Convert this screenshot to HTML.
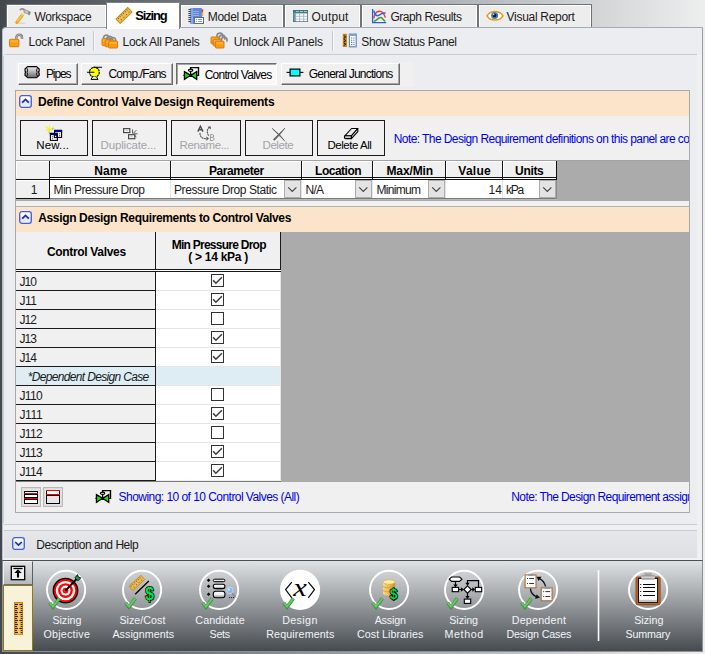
<!DOCTYPE html>
<html>
<head>
<meta charset="utf-8">
<title>Sizing - Design Requirements</title>
<style>
*{box-sizing:border-box;margin:0;padding:0}
html,body{width:705px;height:654px;overflow:hidden}
body{position:relative;font-family:"Liberation Sans",sans-serif;font-size:12px;color:#1a1a1a;
 background:linear-gradient(to right,#42484e 0%,#6d7379 25%,#9a9ea3 50%,#c6c9cc 78%,#d3d5d7 85%,#eeeeef 100%);}
.abs{position:absolute}
.t{position:absolute;white-space:nowrap;line-height:14px;height:14px}
/* tabs */
.tab{position:absolute;top:4px;height:24px;background:#ededed;border:1px solid #6f7479;border-bottom:none;box-shadow:inset 1px 1px 0 #fff,inset -1px 0 0 #fff}
.tab.act{top:2px;height:27px;background:#fff;border-color:#7d8287;box-shadow:none}
/* main panel */
#main{position:absolute;left:2px;top:27px;width:701px;height:534px;background:#ecedf0;border:1px solid #9a9ea3;border-left-color:#b9bec8;border-top-color:#a4aab4;border-radius:4px 0 0 0}
.hl{position:absolute;height:1px;background:#c6c8cd}
.vsep{position:absolute;width:1px;background:#c6c8cd}
/* nav buttons */
.nb{position:absolute;top:63px;height:22px;background:#f0f0f0;border:1px solid;border-color:#fff #6b6b6b #6b6b6b #fff;box-shadow:inset -1px -1px 0 #a6a6a6}
.nb.dn{border-color:#6b6b6b #fff #fff #6b6b6b;box-shadow:inset 1px 1px 0 #a6a6a6;background:#f8f8f8}
/* sections */
.ohead{position:absolute;left:16px;width:673px;height:25px;background:#fce4cb}
.ohead b{position:absolute;left:21px;top:5px;font-size:13px;line-height:15px;white-space:nowrap;color:#000}
.cbox{position:absolute;left:3px;top:4px;width:13px;height:13px;border:1px solid #3c50c8;border-radius:2px;background:#eef2ff}
.btn{position:absolute;top:120px;height:36px;background:#f0f0f0;border:1px solid #1a1a1a;font-size:12px;text-align:center}
.btn.dis{color:#9d9d9d}
.gray{position:absolute;background:#ababab}
/* grids */
.hd{position:absolute;background:#f0f0f0;font-weight:bold;text-align:center;font-size:12px;color:#000}
.c1{position:absolute;left:16px;width:139px;height:18px;background:#f0f0f0;border-bottom:0}
.dd{position:absolute;top:180px;width:17px;height:18px;background:#e3e3e3;border:1px solid #adadad}
.chk{position:absolute;left:211px;width:13px;height:13px;border:1px solid #333;background:#fff}
/* bottom bar */
#bar{position:absolute;left:2px;top:560px;width:701px;height:92px;border:1px solid #8b9096;border-top-color:#4b5056;
 background:linear-gradient(to bottom,#dfe2e4 0%,#464b50 100%)}
.circ{position:absolute;top:570px;width:40px;height:40px;border-radius:50%;border:2px solid #fff;background:rgba(255,255,255,.28)}
.circ.on{background:#fff}
.bl{position:absolute;color:#eef1f5;font-size:12px;line-height:14px;white-space:nowrap;text-align:center;transform:translateX(-50%)}
.sb{position:absolute;top:487px;width:20px;height:20px;background:#e4e4e4;border:1px solid #b9b9b9;box-shadow:inset 0 0 0 1px #dcdcdc}
.sb svg{position:absolute;left:0;top:0}
</style>
</head>
<body>

<!-- TABS -->
<div class="tab" style="left:6px;width:101px"></div>
<div class="tab" style="left:180px;width:104px"></div>
<div class="tab" style="left:284px;width:77px"></div>
<div class="tab" style="left:361px;width:117px"></div>
<div class="tab" style="left:478px;width:114px"></div>

<div id="main"></div>
<div class="tab act" style="left:106px;width:74px"></div>


<!-- TOOLBAR -->
<div class="vsep" style="left:93px;top:31px;height:20px;box-shadow:1px 0 0 #f8f8fa"></div>
<div class="vsep" style="left:332px;top:31px;height:20px;box-shadow:1px 0 0 #f8f8fa"></div>
<div class="abs" style="left:3px;top:54px;width:695px;height:471px;border:1px solid #c9ccd3;border-radius:4px 0 0 4px;border-right:none"></div>

<!-- inner panel -->
<div class="abs" style="left:4px;top:55px;width:693px;height:469px;background:#ecedf0"></div>
<div class="abs" style="left:16px;top:62px;width:398px;height:25px;background:#f0f0f0"></div>
<div class="abs" style="left:697px;top:54px;width:5px;height:506px;background:#f0f0f0"></div>

<!-- NAV BUTTONS -->
<div class="nb" style="left:18px;width:60px"></div>
<div class="nb" style="left:81px;width:92px"></div>
<div class="nb dn" style="left:176px;width:101px"></div>
<div class="nb" style="left:281px;width:119px"></div>

<!-- SECTION 1 -->
<div class="abs" style="left:15px;top:90px;width:675px;height:423px;border:1px solid #a9a9a9;background:#f0f0f0"></div>
<div class="ohead" style="top:91px"></div><svg class="abs" style="left:19px;top:95px" width="13" height="13" viewBox="0 0 13 13"><defs><linearGradient id="cb1" x1="0" y1="0" x2="0" y2="1"><stop offset="0" stop-color="#fff"/><stop offset=".45" stop-color="#f4f5fa"/><stop offset=".5" stop-color="#dfe2ee"/><stop offset="1" stop-color="#f2f3f9"/></linearGradient></defs><rect x=".7" y=".7" width="11.6" height="11.6" rx="2.2" fill="url(#cb1)" stroke="#3f5fe0" stroke-width="1.3"/><path d="M3.2 7.6 L6.5 4.5 L9.8 7.6" fill="none" stroke="#1f2fa8" stroke-width="1.7"/></svg>

<div class="btn" style="left:20px;width:68px"></div>
<div class="btn dis" style="left:92px;width:75px"></div>
<div class="btn dis" style="left:171px;width:70px"></div>
<div class="btn dis" style="left:245px;width:68px"></div>
<div class="btn" style="left:317px;width:68px"></div>

<!-- grid 1 -->
<div class="gray" style="left:16px;top:160px;width:673px;height:41px"></div>
<div class="abs" style="left:16px;top:160px;width:673px;height:1px;background:#a2a2a2"></div>
<div class="abs" style="left:16px;top:161px;width:541px;height:38px;background:#f0f0f0"></div>
<div class="abs" style="left:16px;top:161px;width:33px;height:16px;border-top:1px solid #fff;border-left:1px solid #fff"></div>
<div class="abs" style="left:50px;top:161px;width:120px;height:16px;border-top:1px solid #fff;border-left:1px solid #fff"></div>
<div class="abs" style="left:171px;top:161px;width:130px;height:16px;border-top:1px solid #fff;border-left:1px solid #fff"></div>
<div class="abs" style="left:302px;top:161px;width:70px;height:16px;border-top:1px solid #fff;border-left:1px solid #fff"></div>
<div class="abs" style="left:373px;top:161px;width:72px;height:16px;border-top:1px solid #fff;border-left:1px solid #fff"></div>
<div class="abs" style="left:446px;top:161px;width:56px;height:16px;border-top:1px solid #fff;border-left:1px solid #fff"></div>
<div class="abs" style="left:503px;top:161px;width:53px;height:16px;border-top:1px solid #fff;border-left:1px solid #fff"></div>
<div class="abs" style="left:50px;top:180px;width:506px;height:18px;background:#fff"></div>
<div class="abs" style="left:50px;top:177px;width:507px;height:1px;background:#111"></div>
<div class="abs" style="left:50px;top:178px;width:506px;height:1px;background:#fff"></div>
<div class="abs" style="left:16px;top:179px;width:541px;height:1px;background:#111"></div>
<div class="abs" style="left:16px;top:180px;width:33px;height:1px;background:#fff"></div>
<div class="abs" style="left:16px;top:198px;width:34px;height:1px;background:#111"></div>
<div class="abs" style="left:50px;top:198px;width:507px;height:1px;background:#7a7a7a"></div>
<div class="abs" style="left:16px;top:199px;width:541px;height:1px;background:#b8b8b8"></div>
<div class="abs" style="left:49px;top:161px;width:1px;height:38px;background:#111"></div>
<div class="abs" style="left:170px;top:161px;width:1px;height:18px;background:#111"></div>
<div class="abs" style="left:301px;top:161px;width:1px;height:18px;background:#111"></div>
<div class="abs" style="left:372px;top:161px;width:1px;height:18px;background:#111"></div>
<div class="abs" style="left:445px;top:161px;width:1px;height:18px;background:#111"></div>
<div class="abs" style="left:502px;top:161px;width:1px;height:18px;background:#111"></div>
<div class="abs" style="left:556px;top:161px;width:1px;height:18px;background:#111"></div>
<div class="abs" style="left:170px;top:180px;width:1px;height:18px;background:#e4e4e4"></div>
<div class="abs" style="left:301px;top:180px;width:1px;height:18px;background:#e4e4e4"></div>
<div class="abs" style="left:372px;top:180px;width:1px;height:18px;background:#e4e4e4"></div>
<div class="abs" style="left:445px;top:180px;width:1px;height:18px;background:#e4e4e4"></div>
<div class="abs" style="left:502px;top:180px;width:1px;height:18px;background:#e4e4e4"></div>
<div class="abs" style="left:556px;top:180px;width:1px;height:19px;background:#8a8a8a"></div>

<div class="dd" style="left:284px"><svg width="15" height="16" viewBox="0 0 15 16" style="position:absolute;left:0;top:0"><path d="M3.2 6.4 L7.3 10.4 L11.4 6.4" fill="none" stroke="#404040" stroke-width="1.1"/></svg></div>
<div class="dd" style="left:355px"><svg width="15" height="16" viewBox="0 0 15 16" style="position:absolute;left:0;top:0"><path d="M3.2 6.4 L7.3 10.4 L11.4 6.4" fill="none" stroke="#404040" stroke-width="1.1"/></svg></div>
<div class="dd" style="left:428px"><svg width="15" height="16" viewBox="0 0 15 16" style="position:absolute;left:0;top:0"><path d="M3.2 6.4 L7.3 10.4 L11.4 6.4" fill="none" stroke="#404040" stroke-width="1.1"/></svg></div>
<div class="dd" style="left:539px"><svg width="15" height="16" viewBox="0 0 15 16" style="position:absolute;left:0;top:0"><path d="M3.2 6.4 L7.3 10.4 L11.4 6.4" fill="none" stroke="#404040" stroke-width="1.1"/></svg></div>

<!-- SECTION 2 -->
<div class="abs" style="left:16px;top:206px;width:673px;height:1px;background:#b4b4b4"></div>
<div class="ohead" style="top:207px"></div><svg class="abs" style="left:19px;top:211px" width="13" height="13" viewBox="0 0 13 13"><defs><linearGradient id="cb2" x1="0" y1="0" x2="0" y2="1"><stop offset="0" stop-color="#fff"/><stop offset=".45" stop-color="#f4f5fa"/><stop offset=".5" stop-color="#dfe2ee"/><stop offset="1" stop-color="#f2f3f9"/></linearGradient></defs><rect x=".7" y=".7" width="11.6" height="11.6" rx="2.2" fill="url(#cb2)" stroke="#3f5fe0" stroke-width="1.3"/><path d="M3.2 7.6 L6.5 4.5 L9.8 7.6" fill="none" stroke="#1f2fa8" stroke-width="1.7"/></svg>
<div class="gray" style="left:16px;top:232px;width:673px;height:250px"></div>
<div class="abs" style="left:16px;top:232px;width:265px;height:249px;background:#fff"></div>
<div class="abs" style="left:16px;top:232px;width:265px;height:38px;background:#f0f0f0"></div>
<div class="abs" style="left:16px;top:271px;width:139px;height:210px;background:#f0f0f0"></div>
<div class="abs" style="left:16px;top:367px;width:264px;height:18px;background:#deedf4"></div>

<div class="abs" style="left:155px;top:232px;width:1px;height:249px;background:#1a1a1a"></div>
<div class="abs" style="left:280px;top:232px;width:1px;height:39px;background:#1a1a1a"></div>
<div class="abs" style="left:16px;top:269px;width:265px;height:1px;background:#1a1a1a"></div>
<div class="abs" style="left:16px;top:270px;width:265px;height:1px;background:#fff"></div>
<div class="abs" style="left:16px;top:271px;width:140px;height:1px;background:#1a1a1a"></div>
<div class="abs" style="left:156px;top:271px;width:125px;height:1px;background:#1a1a1a"></div>
<div class="abs" style="left:16px;top:290px;width:140px;height:1px;background:#1a1a1a"></div>
<div class="abs" style="left:156px;top:290px;width:124px;height:1px;background:#e6e6e6"></div>
<div class="abs" style="left:16px;top:309px;width:140px;height:1px;background:#1a1a1a"></div>
<div class="abs" style="left:156px;top:309px;width:124px;height:1px;background:#e6e6e6"></div>
<div class="abs" style="left:16px;top:328px;width:140px;height:1px;background:#1a1a1a"></div>
<div class="abs" style="left:156px;top:328px;width:124px;height:1px;background:#e6e6e6"></div>
<div class="abs" style="left:16px;top:347px;width:140px;height:1px;background:#1a1a1a"></div>
<div class="abs" style="left:156px;top:347px;width:124px;height:1px;background:#e6e6e6"></div>
<div class="abs" style="left:16px;top:366px;width:140px;height:1px;background:#1a1a1a"></div>
<div class="abs" style="left:156px;top:366px;width:124px;height:1px;background:#e6e6e6"></div>
<div class="abs" style="left:16px;top:385px;width:140px;height:1px;background:#1a1a1a"></div>
<div class="abs" style="left:156px;top:385px;width:124px;height:1px;background:#e6e6e6"></div>
<div class="abs" style="left:16px;top:404px;width:140px;height:1px;background:#1a1a1a"></div>
<div class="abs" style="left:156px;top:404px;width:124px;height:1px;background:#e6e6e6"></div>
<div class="abs" style="left:16px;top:423px;width:140px;height:1px;background:#1a1a1a"></div>
<div class="abs" style="left:156px;top:423px;width:124px;height:1px;background:#e6e6e6"></div>
<div class="abs" style="left:16px;top:442px;width:140px;height:1px;background:#1a1a1a"></div>
<div class="abs" style="left:156px;top:442px;width:124px;height:1px;background:#e6e6e6"></div>
<div class="abs" style="left:16px;top:461px;width:140px;height:1px;background:#1a1a1a"></div>
<div class="abs" style="left:156px;top:461px;width:124px;height:1px;background:#e6e6e6"></div>
<div class="abs" style="left:16px;top:480px;width:140px;height:1px;background:#1a1a1a"></div>
<div class="abs" style="left:156px;top:480px;width:125px;height:1px;background:#ececec"></div>
<div class="abs" style="left:16px;top:481px;width:265px;height:1px;background:#7c7c7c;z-index:2"></div>
<div class="abs" style="left:280px;top:272px;width:1px;height:208px;background:#e6e6e6"></div>
<svg class="abs" style="left:211px;top:274px" width="13" height="13" viewBox="0 0 13 13"><rect x=".5" y=".5" width="12" height="12" fill="#fff" stroke="#333"/><path d="M2.1 6.3 L4.9 9.2 L10.9 3.2" fill="none" stroke="#3a3a3a" stroke-width="1.5"/></svg>
<svg class="abs" style="left:211px;top:293px" width="13" height="13" viewBox="0 0 13 13"><rect x=".5" y=".5" width="12" height="12" fill="#fff" stroke="#333"/><path d="M2.1 6.3 L4.9 9.2 L10.9 3.2" fill="none" stroke="#3a3a3a" stroke-width="1.5"/></svg>
<svg class="abs" style="left:211px;top:312px" width="13" height="13" viewBox="0 0 13 13"><rect x=".5" y=".5" width="12" height="12" fill="#fff" stroke="#333"/></svg>
<svg class="abs" style="left:211px;top:331px" width="13" height="13" viewBox="0 0 13 13"><rect x=".5" y=".5" width="12" height="12" fill="#fff" stroke="#333"/><path d="M2.1 6.3 L4.9 9.2 L10.9 3.2" fill="none" stroke="#3a3a3a" stroke-width="1.5"/></svg>
<svg class="abs" style="left:211px;top:350px" width="13" height="13" viewBox="0 0 13 13"><rect x=".5" y=".5" width="12" height="12" fill="#fff" stroke="#333"/><path d="M2.1 6.3 L4.9 9.2 L10.9 3.2" fill="none" stroke="#3a3a3a" stroke-width="1.5"/></svg>
<svg class="abs" style="left:211px;top:388px" width="13" height="13" viewBox="0 0 13 13"><rect x=".5" y=".5" width="12" height="12" fill="#fff" stroke="#333"/></svg>
<svg class="abs" style="left:211px;top:407px" width="13" height="13" viewBox="0 0 13 13"><rect x=".5" y=".5" width="12" height="12" fill="#fff" stroke="#333"/><path d="M2.1 6.3 L4.9 9.2 L10.9 3.2" fill="none" stroke="#3a3a3a" stroke-width="1.5"/></svg>
<svg class="abs" style="left:211px;top:426px" width="13" height="13" viewBox="0 0 13 13"><rect x=".5" y=".5" width="12" height="12" fill="#fff" stroke="#333"/></svg>
<svg class="abs" style="left:211px;top:445px" width="13" height="13" viewBox="0 0 13 13"><rect x=".5" y=".5" width="12" height="12" fill="#fff" stroke="#333"/><path d="M2.1 6.3 L4.9 9.2 L10.9 3.2" fill="none" stroke="#3a3a3a" stroke-width="1.5"/></svg>
<svg class="abs" style="left:211px;top:464px" width="13" height="13" viewBox="0 0 13 13"><rect x=".5" y=".5" width="12" height="12" fill="#fff" stroke="#333"/><path d="M2.1 6.3 L4.9 9.2 L10.9 3.2" fill="none" stroke="#3a3a3a" stroke-width="1.5"/></svg>

<!-- status row -->
<div class="abs" style="left:16px;top:482px;width:673px;height:30px;background:#f0f0f0"></div>
<div class="sb" style="left:21px"><svg width="18" height="18" viewBox="0 0 18 18" shape-rendering="crispEdges"><rect x="2" y="3" width="14" height="13" fill="#000"/><rect x="3" y="4" width="12" height="1" fill="#fff"/><rect x="3" y="7" width="12" height="2" fill="#fff"/><rect x="3" y="12" width="12" height="3" fill="#fff"/><rect x="2" y="5" width="14" height="1" fill="#f00000"/><rect x="2" y="10" width="14" height="1" fill="#f00000"/></svg></div>
<div class="sb" style="left:43px"><svg width="18" height="18" viewBox="0 0 18 18" shape-rendering="crispEdges"><rect x="2" y="2" width="14" height="14" fill="#000"/><rect x="3" y="3" width="12" height="3" fill="#fff"/><rect x="3" y="8" width="12" height="7" fill="#e6e6e6"/><rect x="2" y="2" width="14" height="1" fill="#f00000"/><rect x="2" y="6" width="14" height="1" fill="#f00000"/></svg></div>
<!-- splitter + description -->
<div class="hl" style="left:4px;top:524px;width:693px;background:#c9cbd1"></div>
<svg class="abs" style="left:347px;top:525px" width="9" height="5" viewBox="0 0 9 5"><path d="M0.5 0.5H8.5L4.5 4.5Z" fill="#6a6e74"/></svg>
<div class="abs" style="left:4px;top:530px;width:693px;height:28px;background:linear-gradient(#e6e7ea,#dedfe3);border-top:1px solid #c9cbd1"></div>
<div class="abs" style="left:4px;top:525px;width:693px;height:5px;background:#f0f0f0"></div>
<div class="abs" style="left:4px;top:558px;width:698px;height:2px;background:#f2f2f3"></div>
<svg class="abs" style="left:12px;top:537px" width="13" height="13" viewBox="0 0 13 13"><defs><linearGradient id="cb3" x1="0" y1="0" x2="0" y2="1"><stop offset="0" stop-color="#fff"/><stop offset=".45" stop-color="#f4f5fa"/><stop offset=".5" stop-color="#dfe2ee"/><stop offset="1" stop-color="#f2f3f9"/></linearGradient></defs><rect x=".7" y=".7" width="11.6" height="11.6" rx="2.2" fill="url(#cb3)" stroke="#3f5fe0" stroke-width="1.3"/><path d="M3.2 5 L6.5 8.1 L9.8 5" fill="none" stroke="#1f2fa8" stroke-width="1.7"/></svg>

<div id="bar"></div>
<div class="abs" style="left:3px;top:561px;width:30px;height:24px;background:linear-gradient(#e2e2e3,#b6b8ba);border-right:1px solid #5a5f65;border-bottom:1px solid #6a6f75;border-top:1px solid #f0f0f0;border-left:1px solid #eee"></div>
<div class="abs" style="left:3px;top:585px;width:30px;height:66px;background:#f8f3d8;border:1px solid #8a7a18"></div>
<div class="abs" style="left:597px;top:570px;width:3px;height:71px;background:linear-gradient(to right,rgba(255,255,255,.25) 0 1px,#fcfcfc 1px 2px,rgba(255,255,255,.3) 2px 3px)"></div>
<svg class="abs" style="left:42.0px;top:566px" width="48" height="48" viewBox="0 0 48 48"><circle cx="24.1" cy="23.85" r="19.1" fill="rgba(255,255,255,0.05)" stroke="#fff" stroke-width="1.9"/><circle cx="23.5" cy="24.6" r="12.2" fill="#f00" stroke="#000" stroke-width="1.4"/>
<circle cx="23.5" cy="24.6" r="9.7" fill="#fff"/><circle cx="23.5" cy="24.6" r="7.4" fill="#f00"/>
<circle cx="23.5" cy="24.6" r="5" fill="#fff"/><circle cx="23.5" cy="24.6" r="2.9" fill="#f00"/><circle cx="23.3" cy="24.8" r="1" fill="#ffd0d0"/>
<path d="M23.5 24.6 L34.6 13" stroke="#000" stroke-width="1.9" stroke-linecap="round"/>
<path d="M33 11.8 L35.6 8.6 L36.2 11 L38.8 11.8 L36 14.8 Z" fill="#1f9e50" stroke="#000" stroke-width=".9" stroke-linejoin="round"/><path d="M7.6 36.8 L11 41.2 L17.4 32.4" fill="none" stroke="#3e9640" stroke-width="3.5" stroke-linejoin="miter"/><path d="M7.8 36.9 L11 40.6 L17.2 32.6" fill="none" stroke="#6cc66a" stroke-width="1.9"/></svg>
<svg class="abs" style="left:118.0px;top:566px" width="48" height="48" viewBox="0 0 48 48"><circle cx="24.1" cy="23.85" r="19.1" fill="rgba(255,255,255,0.05)" stroke="#fff" stroke-width="1.9"/><g transform="rotate(-43.2 18.9 16.9)"><rect x="10.8" y="14" width="16.2" height="5.8" fill="#f1b746" stroke="#c98b1a" stroke-width=".9"/>
<path d="M12.6 15.3v.1M15 15.3v.1M17.4 15.3v.1M19.8 15.3v.1M22.2 15.3v.1M24.6 15.3v.1M14 18v.1M17.4 18v.1M20.8 18v.1M24.2 18v.1" stroke="#4a5878" stroke-width="1" stroke-linecap="round"/></g>
<path d="M17.2 28.3 L30.8 15" stroke="#000" stroke-width="1.3"/>
<text x="31.6" y="34" font-family="Liberation Sans" font-weight="bold" font-size="19" text-anchor="middle" fill="#00e24a" stroke="#000" stroke-width="1.7" paint-order="stroke" stroke-linejoin="round" transform="translate(31.6 0) scale(.82 1) translate(-31.6 0)">$</text><path d="M7.6 36.8 L11 41.2 L17.4 32.4" fill="none" stroke="#3e9640" stroke-width="3.5" stroke-linejoin="miter"/><path d="M7.8 36.9 L11 40.6 L17.2 32.6" fill="none" stroke="#6cc66a" stroke-width="1.9"/></svg>
<svg class="abs" style="left:195.0px;top:566px" width="48" height="48" viewBox="0 0 48 48"><circle cx="24.1" cy="23.85" r="19.1" fill="rgba(255,255,255,0.05)" stroke="#fff" stroke-width="1.9"/><defs><linearGradient id="cg" x1="0" y1="0" x2="0" y2="1"><stop offset="0" stop-color="#fff"/><stop offset=".5" stop-color="#f0f0f0"/><stop offset="1" stop-color="#8e8e8e"/></linearGradient></defs>
<path d="M13.6 12.5l1.8 1.8l-1.8 1.8l-1.8-1.8zM13.6 18.5l1.8 1.8l-1.8 1.8l-1.8-1.8zM13.6 26.5l1.8 1.8l-1.8 1.8l-1.8-1.8z" fill="#000"/>
<rect x="18.3" y="13.2" width="11.6" height="2.5" rx="1.25" fill="url(#cg)" stroke="#000" stroke-width="1"/>
<rect x="18.3" y="18.3" width="11.6" height="4.3" rx="2" fill="url(#cg)" stroke="#000" stroke-width="1.1"/>
<rect x="18.3" y="25.2" width="11.6" height="6.5" rx="2.4" fill="url(#cg)" stroke="#000" stroke-width="1.1"/>
<path d="M36.8 26.8 L39.6 30.2" stroke="#8c8c8c" stroke-width="1.8" stroke-linecap="round"/>
<circle cx="34.9" cy="24.5" r="3.2" fill="#86b8ee" stroke="#c4dcf6" stroke-width=".9"/><circle cx="34" cy="23.6" r="1.1" fill="#d8ecff"/>
<path d="M34.2 31.6h.9M36.2 31.6h.9M38.2 31.6h.9" stroke="#000" stroke-width="1"/><path d="M7.6 36.8 L11 41.2 L17.4 32.4" fill="none" stroke="#3e9640" stroke-width="3.5" stroke-linejoin="miter"/><path d="M7.8 36.9 L11 40.6 L17.2 32.6" fill="none" stroke="#6cc66a" stroke-width="1.9"/></svg>
<svg class="abs" style="left:276.0px;top:566px" width="48" height="48" viewBox="0 0 48 48"><circle cx="24.1" cy="23.85" r="19.1" fill="#fff" stroke="#fff" stroke-width="1.9"/><path d="M15.8 16.1 L9.6 23.6 L15.8 31.9M32.3 16.1 L38.5 23.6 L32.3 31.9" fill="none" stroke="#000" stroke-width="1.15"/>
<text x="24" y="29.7" font-family="Liberation Serif" font-style="italic" font-size="25.5" text-anchor="middle" fill="#000" transform="translate(24 0) scale(1.2 1) translate(-24 0)">x</text><path d="M7.6 36.8 L11 41.2 L17.4 32.4" fill="none" stroke="#3e9640" stroke-width="3.5" stroke-linejoin="miter"/><path d="M7.8 36.9 L11 40.6 L17.2 32.6" fill="none" stroke="#6cc66a" stroke-width="1.9"/></svg>
<svg class="abs" style="left:365.0px;top:566px" width="48" height="48" viewBox="0 0 48 48"><circle cx="24.1" cy="23.85" r="19.1" fill="rgba(255,255,255,0.05)" stroke="#fff" stroke-width="1.9"/><defs><linearGradient id="dbg" x1="0" y1="0" x2="1" y2="0"><stop offset="0" stop-color="#f6d98a"/><stop offset=".35" stop-color="#f0c45a"/><stop offset="1" stop-color="#c98f28"/></linearGradient></defs>
<path d="M18 16 V27.6 C18 30.4 30.1 30.4 30.1 27.6 V16Z" fill="url(#dbg)"/>
<path d="M18 20 C18 22.4 30.1 22.4 30.1 20M18 24 C18 26.4 30.1 26.4 30.1 24" fill="none" stroke="#d8a23a" stroke-width=".9"/>
<ellipse cx="24.05" cy="16" rx="6.05" ry="2.2" fill="#fbf0a6" stroke="#e0b050" stroke-width=".7"/>
<text x="28.7" y="32.6" font-family="Liberation Sans" font-weight="bold" font-size="15.5" text-anchor="middle" fill="#00d846" stroke="#000" stroke-width="1.6" paint-order="stroke" stroke-linejoin="round" transform="translate(28.7 0) scale(.9 1) translate(-28.7 0)">$</text><path d="M7.6 36.8 L11 41.2 L17.4 32.4" fill="none" stroke="#3e9640" stroke-width="3.5" stroke-linejoin="miter"/><path d="M7.8 36.9 L11 40.6 L17.2 32.6" fill="none" stroke="#6cc66a" stroke-width="1.9"/></svg>
<svg class="abs" style="left:440.0px;top:566px" width="48" height="48" viewBox="0 0 48 48"><circle cx="24.1" cy="23.85" r="19.1" fill="rgba(255,255,255,0.05)" stroke="#fff" stroke-width="1.9"/><g fill="#fff" stroke="#000" stroke-width="1.1">
<path d="M9.3 13.2 L11.6 11 H19.6 L21.9 13.2 L19.6 15.4 H11.6Z"/>
<rect x="12.2" y="21.4" width="6.4" height="4.3"/><rect x="35.3" y="21.4" width="6.4" height="4.3"/><rect x="24.3" y="33.1" width="6.4" height="4.3"/>
<path d="M27.5 19.8 L31.2 23.5 L27.5 27.2 L23.8 23.5Z"/></g>
<path d="M15.5 15.4V20M18.7 23.5H22M31.2 23.5H33.5M27.5 27.2V31M38.5 21.4V14.7H27.5V18" fill="none" stroke="#000" stroke-width="1.2"/>
<path d="M13.3 18.4H17.7L15.5 21.4ZM20.9 21.2V25.8L23.9 23.5ZM32.3 21.2V25.8L35.3 23.5ZM25.3 29.9H29.7L27.5 33ZM25.3 16.8H29.7L27.5 19.8Z" fill="#000"/><path d="M7.6 36.8 L11 41.2 L17.4 32.4" fill="none" stroke="#3e9640" stroke-width="3.5" stroke-linejoin="miter"/><path d="M7.8 36.9 L11 40.6 L17.2 32.6" fill="none" stroke="#6cc66a" stroke-width="1.9"/></svg>
<svg class="abs" style="left:514.0px;top:566px" width="48" height="48" viewBox="0 0 48 48"><circle cx="24.1" cy="23.85" r="19.1" fill="rgba(255,255,255,0.05)" stroke="#fff" stroke-width="1.9"/><g><rect x="11.1" y="8.9" width="10.9" height="12.9" fill="#fff" stroke="#b36a30" stroke-width="1.1"/><rect x="14.2" y="7.8" width="5.6" height="2.2" fill="#9a9a9a"/>
<path d="M13 12.5h1M15.2 12.5h4.8M13 17.5h1M15.2 17.5h4.8" stroke="#333" stroke-width="1"/></g>
<g><rect x="27.2" y="21.9" width="10.9" height="12.9" fill="#fff" stroke="#b36a30" stroke-width="1.1"/><rect x="30.4" y="20.8" width="5.6" height="2.2" fill="#9a9a9a"/>
<path d="M29.2 25.6h1M31.4 25.6h4.8M29.2 30.5h1M31.4 30.5h4.8" stroke="#333" stroke-width="1"/></g>
<path d="M31.6 20.4 C30.6 16.6 28 13.8 25 12.4" fill="none" stroke="#111" stroke-width="1.3"/>
<path d="M22.4 10.8 L27.6 10.8 L24.6 15Z" fill="#111"/>
<path d="M16.4 22.6 C16.8 26.8 19.6 29.8 23 31" fill="none" stroke="#111" stroke-width="1.3"/>
<path d="M26 31.6 L21 33 L22.6 28.4Z" fill="#111"/><path d="M7.6 36.8 L11 41.2 L17.4 32.4" fill="none" stroke="#3e9640" stroke-width="3.5" stroke-linejoin="miter"/><path d="M7.8 36.9 L11 40.6 L17.2 32.6" fill="none" stroke="#6cc66a" stroke-width="1.9"/></svg>
<svg class="abs" style="left:624.0px;top:566px" width="48" height="48" viewBox="0 0 48 48"><circle cx="24.1" cy="23.85" r="19.1" fill="rgba(255,255,255,0.05)" stroke="#fff" stroke-width="1.9"/><defs><linearGradient id="clg" x1="0" y1="0" x2="0" y2="1"><stop offset="0" stop-color="#8a8a8a"/><stop offset=".5" stop-color="#d6d6d6"/><stop offset="1" stop-color="#7c7c7c"/></linearGradient></defs>
<rect x="12" y="11" width="24.1" height="27.8" rx="1.6" fill="#b9692c" stroke="#8c4a1c" stroke-width="1"/>
<rect x="14.5" y="12.4" width="19.1" height="24" fill="#fff" stroke="#111" stroke-width="1.1"/>
<rect x="15.1" y="33.8" width="17.9" height="2" fill="#c4c4c4"/>
<rect x="20.6" y="7" width="7.2" height="3" rx=".6" fill="#a8a8a8"/>
<rect x="17.3" y="9.2" width="13.6" height="4.3" rx=".8" fill="url(#clg)"/>
<path d="M16.2 18.5h1M19 18.5h12M16.2 21.5h1M19 21.5h12M16.2 25.5h1M19 25.5h12M16.2 29.5h1M19 29.5h12" stroke="#000" stroke-width="1.1"/></svg>
<svg class="abs" style="left:10px;top:565px" width="16" height="16" viewBox="0 0 16 16"><rect x="1.3" y="1.3" width="13.4" height="13.4" fill="#efefef" stroke="#000" stroke-width="1.3"/><path d="M3.4 3.5H12.6" stroke="#000" stroke-width="1.3"/><path d="M8 12.6V6.4" stroke="#000" stroke-width="2.1"/><path d="M4.3 8 L8 4.3 L11.7 8Z" fill="#000"/></svg>
<svg class="abs" style="left:13.5px;top:601.5px" width="9.4" height="33.4" viewBox="0 0 9.4 33.4"><rect x=".6" y=".6" width="8.2" height="32.2" fill="#eeb03c" stroke="#c27c18" stroke-width="1.1"/><rect x="3.6" y="1.2" width="2.2" height="31" fill="#f6c860"/><path d="M1 2.5h3M8.4 2.5h-3" stroke="#111" stroke-width=".9"/><path d="M1 4.5h2M8.4 4.5h-1.6" stroke="#111" stroke-width=".9"/><path d="M1 6.5h3M8.4 6.5h-1.6" stroke="#111" stroke-width=".9"/><path d="M1 8.5h2M8.4 8.5h-1.6" stroke="#111" stroke-width=".9"/><path d="M1 10.5h3M8.4 10.5h-3" stroke="#111" stroke-width=".9"/><path d="M1 12.5h2M8.4 12.5h-1.6" stroke="#111" stroke-width=".9"/><path d="M1 14.5h3M8.4 14.5h-1.6" stroke="#111" stroke-width=".9"/><path d="M1 16.5h2M8.4 16.5h-1.6" stroke="#111" stroke-width=".9"/><path d="M1 18.5h3M8.4 18.5h-3" stroke="#111" stroke-width=".9"/><path d="M1 20.5h2M8.4 20.5h-1.6" stroke="#111" stroke-width=".9"/><path d="M1 22.5h3M8.4 22.5h-1.6" stroke="#111" stroke-width=".9"/><path d="M1 24.5h2M8.4 24.5h-1.6" stroke="#111" stroke-width=".9"/><path d="M1 26.5h3M8.4 26.5h-3" stroke="#111" stroke-width=".9"/><path d="M1 28.5h2M8.4 28.5h-1.6" stroke="#111" stroke-width=".9"/><path d="M1 30.5h3M8.4 30.5h-1.6" stroke="#111" stroke-width=".9"/></svg>
<!-- tab icons -->
<svg class="abs" style="left:14px;top:7px" width="18" height="18" viewBox="0 0 18 18">
 <ellipse cx="7.5" cy="16.2" rx="4.5" ry=".8" fill="#cfcfcf" opacity=".7"/>
 <path d="M2.9 15.4 L8.6 7.6" stroke="#e8a90c" stroke-width="3.3" stroke-linecap="round"/>
 <path d="M3.3 14.4 L8.2 7.8" stroke="#f9d24e" stroke-width="1.1" stroke-linecap="round"/>
 <path d="M8.4 7.8 L10.6 4.6" stroke="#e2e2e2" stroke-width="2.6"/>
 <path d="M6.4 2.6 C7.6 1.4 9.6 1.6 10.6 3.4" fill="none" stroke="#909090" stroke-width="1.7" stroke-linecap="round"/>
 <path d="M9.8 2.8 L12.2 3.2 L16.4 5 L15.4 8 L13.4 6.6 L10.4 5.6Z" fill="#c9c9c9" stroke="#8a8a8a" stroke-width=".8"/>
 <path d="M14.6 4.4 L16.4 5 L15.4 8 L13.8 6.8Z" fill="#8a8a8a"/>
</svg>
<svg class="abs" style="left:115px;top:6px" width="18" height="18" viewBox="0 0 18 18">
 <g transform="rotate(-44 9 9.5)"><rect x="0.8" y="6.4" width="16.4" height="6.2" fill="#f3bd45" stroke="#c88a18" stroke-width="1"/>
 <path d="M3 7.6v0.1M5.4 7.6v0.1M7.8 7.6v0.1M10.2 7.6v0.1M12.6 7.6v0.1M15 7.6v0.1M4.2 10.6v0.1M7.8 10.6v0.1M11.4 10.6v0.1M15 10.6v0.1" stroke="#4a5a78" stroke-width="1.1" stroke-linecap="round"/></g>
</svg>
<svg class="abs" style="left:187px;top:7px" width="18" height="18" viewBox="0 0 18 18">
 <rect x="3" y="1" width="12" height="16" rx="1" fill="#5f86dc"/>
 <rect x="3" y="1" width="3" height="16" fill="#86a6ea"/>
 <path d="M14.6 2.2h1.6v3.4h-1.6z" fill="#e0483c"/><path d="M14.6 5.6h1.6v3.4h-1.6z" fill="#e9b11c"/>
 <path d="M6.5 4.5h6M6.5 6.5h6M6.5 8.5h6" stroke="#c8d6f6" stroke-width="1" stroke-dasharray="1 1"/>
 <path d="M1.4 2.6h2.4M1.4 4.6h2.4M1.4 6.6h2.4M1.4 8.6h2.4M1.4 10.6h2.4M1.4 12.6h2.4M1.4 14.6h2.4" stroke="#333" stroke-width="1"/>
 <rect x="7.5" y="10.5" width="9" height="6" fill="#fff" stroke="#5b6f8c"/>
 <path d="M9 12.5h1M11 12.5h4M9 14.5h1M11 14.5h4" stroke="#7f97c6" stroke-width="1"/>
</svg>
<svg class="abs" style="left:292px;top:9px" width="17" height="14" viewBox="0 0 17 14">
 <rect x="1" y="1" width="15" height="12" fill="#a9b5c9"/>
 <rect x="1" y="1" width="15" height="3" fill="#3f8585"/>
 <rect x="1" y="4" width="2.4" height="9" fill="#6aa3a3"/>
 <path d="M4 2.5h3M8 2.5h3M12 2.5h3" stroke="#9cc9c9" stroke-width="1"/>
 <g fill="#fff"><rect x="4.2" y="4.8" width="3" height="2"/><rect x="8.2" y="4.8" width="3" height="2"/><rect x="12.2" y="4.8" width="3" height="2"/>
 <rect x="4.2" y="7.7" width="3" height="2"/><rect x="8.2" y="7.7" width="3" height="2"/><rect x="12.2" y="7.7" width="3" height="2"/>
 <rect x="4.2" y="10.5" width="3" height="2"/><rect x="8.2" y="10.5" width="3" height="2"/><rect x="12.2" y="10.5" width="3" height="2"/></g>
 <rect x="1.3" y="1.3" width="14.4" height="11.4" fill="none" stroke="#4a6a7a" stroke-width=".6"/>
</svg>
<svg class="abs" style="left:371px;top:8px" width="17" height="17" viewBox="0 0 17 17">
 <path d="M1.6 1v13.6h13.6" fill="none" stroke="#2563c4" stroke-width="1.3"/>
 <path d="M2.8 10.4 C4.4 1.2 11.6 0.6 14.4 9.6" fill="none" stroke="#f03a34" stroke-width="1.5"/>
 <path d="M2.8 2.6 C4 7 5.4 8.6 7.6 7.4 C10 5.6 11.6 4.4 14.6 5" fill="none" stroke="#2a66d8" stroke-width="1.5"/>
 <path d="M2.8 13.2 C5.6 13 7 9.4 9.6 9.6 C11.6 9.8 12.4 12.4 14.2 13.2" fill="none" stroke="#3f9a3a" stroke-width="1.5"/>
</svg>
<svg class="abs" style="left:486px;top:9px" width="18" height="14" viewBox="0 0 18 14">
 <path d="M1 6.8 C4.4 1 13.6 1 17 6.8 C13.6 12.4 4.4 12.4 1 6.8Z" fill="#fff" stroke="#e39a1c" stroke-width="1.5"/>
 <circle cx="8.6" cy="6.4" r="3.5" fill="#3f7fc8"/><circle cx="8.6" cy="6.4" r="1.9" fill="#1a1a22"/><circle cx="7.6" cy="5.4" r=".8" fill="#cfe0f4"/>
</svg>
<!-- toolbar icons -->
<svg class="abs" style="left:8px;top:33px" width="17" height="16" viewBox="0 0 17 16">
 <path d="M8.4 6 V4.6 C8.4 0.8 14 0.8 14 4.6 V6" fill="none" stroke="#7a7a7a" stroke-width="2.4"/><path d="M8.4 6 V4.6 C8.4 0.8 14 0.8 14 4.6 V6" fill="none" stroke="#c4c4c4" stroke-width=".9"/>
 <rect x="1.5" y="6.3" width="9.4" height="7.4" rx=".8" fill="#ff9c0e" stroke="#d77d12"/>
 <rect x="2.4" y="7.2" width="7.6" height="2.2" fill="#ffb640" opacity=".8"/>
</svg>
<svg class="abs" style="left:101px;top:33px" width="19" height="17" viewBox="0 0 19 17">
 <g><path d="M2.6 6 V4.6 C2.6 1.4 8 1.4 8 4.6 V6" fill="none" stroke="#8a8a8a" stroke-width="1.7"/><rect x="1" y="5.6" width="9" height="7" rx=".8" fill="#ff9c0e" stroke="#d77d12"/><rect x="1.9" y="6.5" width="7.2" height="2" fill="#ffb640" opacity=".8"/></g>
 <g transform="translate(3.2 1.2)"><path d="M2.6 6 V4.6 C2.6 1.4 8 1.4 8 4.6 V6" fill="none" stroke="#8a8a8a" stroke-width="1.7"/><rect x="1" y="5.6" width="9" height="7" rx=".8" fill="#ff9c0e" stroke="#d77d12"/><rect x="1.9" y="6.5" width="7.2" height="2" fill="#ffb640" opacity=".8"/></g><g transform="translate(6.6 2.4)"><path d="M2.6 6 V4.6 C2.6 1.4 8 1.4 8 4.6 V6" fill="none" stroke="#8a8a8a" stroke-width="1.7"/><rect x="1" y="5.6" width="9" height="7" rx=".8" fill="#ff9c0e" stroke="#d77d12"/><rect x="1.9" y="6.5" width="7.2" height="2" fill="#ffb640" opacity=".8"/></g>
</svg>
<svg class="abs" style="left:209px;top:31px" width="22" height="19" viewBox="0 0 22 19">
 <g><path d="M8 6.4 V4.6 C8 1.2 13.6 1.2 13.6 4.6 V6.6" fill="none" stroke="#8a8a8a" stroke-width="1.7"/><rect x="2" y="6" width="8.6" height="6.8" rx=".8" fill="#ff9c0e" stroke="#d77d12"/><rect x="2.9" y="6.9" width="6.8" height="2" fill="#ffb640" opacity=".8"/></g>
 <g transform="translate(2.2 2.1)"><path d="M8 6.4 V4.6 C8 1.2 13.6 1.2 13.6 4.6 V6.6" fill="none" stroke="#8a8a8a" stroke-width="1.7"/><rect x="2" y="6" width="8.6" height="6.8" rx=".8" fill="#ff9c0e" stroke="#d77d12"/><rect x="2.9" y="6.9" width="6.8" height="2" fill="#ffb640" opacity=".8"/></g><g transform="translate(4.4 4.2)"><path d="M8 6.4 V4.6 C8 1.2 13.6 1.2 13.6 4.6 V6.6" fill="none" stroke="#8a8a8a" stroke-width="1.7"/><rect x="2" y="6" width="8.6" height="6.8" rx=".8" fill="#ff9c0e" stroke="#d77d12"/><rect x="2.9" y="6.9" width="6.8" height="2" fill="#ffb640" opacity=".8"/></g>
</svg>
<svg class="abs" style="left:342px;top:33px" width="16" height="15" viewBox="0 0 16 15">
 <rect x=".8" y=".8" width="4.2" height="13.2" fill="#c98a0c"/>
 <path d="M1.8 2.6l2 1.4l-2 1.4M1.8 6.2l2 1.4l-2 1.4M1.8 9.8l2 1.4l-2 1.4" fill="none" stroke="#111" stroke-width="1"/>
 <rect x="7.4" y="1.2" width="6.8" height="12.6" fill="#fff" stroke="#5f86c8" stroke-width="1.2"/>
 <rect x="7" y=".8" width="7.6" height="2.2" fill="#7fa0dc"/>
 <path d="M9 5h1.2M9 7.2h1.2M9 9.4h1.2M9 11.6h1.2" stroke="#2f7ff0" stroke-width="1.1"/>
 <path d="M10.8 5h2M10.8 7.2h2M10.8 9.4h2M10.8 11.6h2" stroke="#9aa4b4" stroke-width="1"/>
</svg>
<!-- nav icons -->
<svg class="abs" style="left:23px;top:65px" width="18" height="14" viewBox="0 0 18 14">
 <defs><linearGradient id="pg" x1="0" y1="0" x2="0" y2="1"><stop offset="0" stop-color="#efefef"/><stop offset=".4" stop-color="#bdbdbd"/><stop offset="1" stop-color="#666"/></linearGradient></defs>
 <path d="M4.6 1.6 H13.6 L16.2 4 V6.2 L15.4 7.2 L16.2 8.2 V10.4 L13.6 12.7 H4.6 L2 10.4 V8.2 L2.8 7.2 L2 6.2 V4Z" fill="url(#pg)" stroke="#000" stroke-width="1.1" stroke-linejoin="round"/>
 <path d="M3.9 3.2 Q5.2 5.2 4.2 7 M4.2 7.4 Q5.2 9.4 3.9 11.2 M14.3 3.2 Q13 5.2 14 7 M14 7.4 Q13 9.4 14.3 11.2" fill="none" stroke="#000" stroke-width=".9"/>
</svg>
<svg class="abs" style="left:86px;top:65px" width="18" height="16" viewBox="0 0 18 16">
 <circle cx="8.4" cy="7.2" r="4.9" fill="#ffff00" stroke="#000" stroke-width="1.1" stroke-dasharray="2.2 .5"/>
 <path d="M1 7.2H8.4M7.4 2.3H16" stroke="#000" stroke-width="1.1"/>
 <path d="M6.4 12 L5 14.4 H12 L10.6 12" fill="#e8e8e8" stroke="#000" stroke-width="1"/>
</svg>
<svg class="abs" style="left:183px;top:66px" width="17" height="15" viewBox="0 0 17 15">
 <path d="M7.6 9.2V4.8M7.6 3.6V1.6H15.5V9.3H13.8" fill="none" stroke="#000" stroke-width="1.35"/>
 <ellipse cx="7.6" cy="4.3" rx="2.2" ry="1.1" fill="#f0f0f0" stroke="#000" stroke-width="1.2"/>
 <path d="M1.5 5.6V13.2L7.6 9.3ZM13.7 5.6V13.2L7.6 9.3Z" fill="#00f400" stroke="#000" stroke-width="1.35" stroke-linejoin="miter"/>
 <path d="M.2 9.3H1.4" stroke="#000" stroke-width="1.1"/>
</svg>
<svg class="abs" style="left:286px;top:68px" width="18" height="9" viewBox="0 0 18 9">
 <path d="M.6 4.4H17.4" stroke="#000" stroke-width="1.1"/>
 <rect x="4.1" y="1.1" width="9.8" height="6.8" fill="#00ffff" stroke="#000" stroke-width="1.2"/>
</svg>
<!-- section toolbar icons -->
<svg class="abs" style="left:45px;top:125px" width="18" height="17" viewBox="0 0 18 17">
 <path d="M5 5.4 L1.2 1.6M5 5.4L4.4 .8M5 5.4L8.8 2M5 5.4L.8 5M5 5.4L2.8 8.2" stroke="#f6f200" stroke-width="1.05"/>
 <path d="M1.4 7.6v.1M4.4 7.2v1.4M7 4.2l1.6-.6" stroke="#9a9a9a" stroke-width="1"/>
 <rect x="9.6" y="5.4" width="7" height="7" fill="#fff" stroke="#000" stroke-width="1.1"/><rect x="9.1" y="4.9" width="8" height="2.2" fill="#000080"/>
 <path d="M14.6 8.6v.1M14.6 10.6v.1" stroke="#555" stroke-width="1.1" stroke-linecap="round"/>
 <rect x="5.4" y="8.4" width="7" height="7" fill="#fff" stroke="#000" stroke-width="1.1"/><rect x="4.9" y="7.9" width="8" height="2.2" fill="#000080"/>
 <path d="M7.4 11.6v.1M7.4 13.6v.1M10.6 11.4v.1" stroke="#555" stroke-width="1.1" stroke-linecap="round"/>
 <rect x="9.3" y="10.2" width="2.4" height="2.4" fill="#fff" stroke="#000" stroke-width="1"/>
</svg>
<svg class="abs" style="left:122px;top:127px" width="17" height="13" viewBox="0 0 17 13">
 <rect x="1.6" y="1.6" width="6.2" height="4" fill="#f6f6f6" stroke="#4a4a4a" stroke-width="1.2"/>
 <rect x="6.6" y="7.7" width="6.2" height="4" fill="#f6f6f6" stroke="#4a4a4a" stroke-width="1.2"/>
 <path d="M10.6 6.6V2.4M11.4 6.4L14.4 3.2M11.6 6.8H15.6M11.8 7.6L14.4 10" stroke="#5a5a5a" stroke-width="1"/>
 <path d="M3.6 3.6h2.2M8.6 9.7h2.2" stroke="#c8c8c8" stroke-width="1"/>
</svg>
<svg class="abs" style="left:196px;top:125px" width="19" height="17" viewBox="0 0 19 17">
 <path d="M1.8 6.6 L4.4 1.2 L7 6.6 M2.8 4.8H6" fill="none" stroke="#4e4e4e" stroke-width="1.4"/>
 <path d="M4 8.4 C4 12 6.4 13.8 10.4 13.6" fill="none" stroke="#5a5a5a" stroke-width="1.2" stroke-dasharray="1 1.5" stroke-linecap="round"/>
 <path d="M10.4 11.4 L13 13.6 L10.4 15.8Z" fill="#5a5a5a"/>
 <path d="M12.4 10.2 C10.6 7 11 4 13.4 2.4" fill="none" stroke="#5a5a5a" stroke-width="1.2" stroke-dasharray="1 1.5" stroke-linecap="round"/>
 <path d="M11.6 1.4 H14.8 V4.6Z" fill="#5a5a5a"/>
 <path d="M14.4 9.6V15.6M14.4 9.6H16.2C18.2 9.6 18.2 12.4 16.2 12.4H14.4M16.2 12.4C18.6 12.4 18.6 15.6 16.2 15.6H14.4" fill="none" stroke="#9a9a9a" stroke-width="1"/>
</svg>
<svg class="abs" style="left:271px;top:127px" width="16" height="15" viewBox="0 0 16 15">
 <path d="M1.4 1.6 L9 9.2 L13.4 13.6 L8.6 8 Z" fill="#626262" stroke="#626262" stroke-width="1" stroke-linejoin="round"/>
 <path d="M13.8 1.2 L8 7 L2.4 12.4 L3.6 13.2 L8.4 8 Z" fill="#626262" stroke="#626262" stroke-width=".9" stroke-linejoin="round"/>
</svg>
<svg class="abs" style="left:343px;top:127px" width="17" height="13" viewBox="0 0 17 13">
 <path d="M1.8 8.8 L8.6 1.5 H14.8 L8.4 8.8Z" fill="#fafafa" stroke="#000" stroke-width="1.1" stroke-linejoin="round"/>
 <path d="M1.8 8.8 H8.4 V11.6 H2.4 C1.4 11.6 1.2 9.8 1.8 8.8Z" fill="#c4c4c4" stroke="#000" stroke-width="1.1" stroke-linejoin="round"/>
 <path d="M8.4 8.8 L14.8 1.5 V4.6 L8.4 11.6Z" fill="#e0e0e0" stroke="#000" stroke-width="1.1" stroke-linejoin="round"/>
 <path d="M5 7.6L10 2.4M7 7.6L12 2.4" stroke="#d0d0d0" stroke-width=".8"/>
</svg>
<!-- status valve icon -->
<svg class="abs" style="left:95px;top:489px" width="17" height="15" viewBox="0 0 17 15">
 <path d="M7.6 9.2V4.8M7.6 3.6V1.6H15.5V9.3H13.8" fill="none" stroke="#000" stroke-width="1.35"/>
 <ellipse cx="7.6" cy="4.3" rx="2.2" ry="1.1" fill="#f0f0f0" stroke="#000" stroke-width="1.2"/>
 <path d="M1.5 5.6V13.2L7.6 9.3ZM13.7 5.6V13.2L7.6 9.3Z" fill="#00f400" stroke="#000" stroke-width="1.35"/>
 <path d="M.2 9.3H1.4" stroke="#000" stroke-width="1.1"/>
</svg>

<span class="t" style="left:34.50px;top:9.84px;font-size:12px;letter-spacing:-0.341px;">Workspace</span>
<span class="t" style="left:135.30px;top:8.50px;font-size:13px;font-weight:bold;letter-spacing:-1.187px;color:#000;">Sizing</span>
<span class="t" style="left:207.70px;top:9.84px;font-size:12px;letter-spacing:-0.277px;">Model Data</span>
<span class="t" style="left:311.60px;top:9.84px;font-size:12px;letter-spacing:0.162px;">Output</span>
<span class="t" style="left:390.40px;top:9.84px;font-size:12px;letter-spacing:-0.433px;">Graph Results</span>
<span class="t" style="left:506.60px;top:9.84px;font-size:12px;letter-spacing:-0.299px;">Visual Report</span>
<span class="t" style="left:28.60px;top:34.84px;font-size:12px;letter-spacing:-0.345px;">Lock Panel</span>
<span class="t" style="left:122.50px;top:34.84px;font-size:12px;letter-spacing:-0.289px;">Lock All Panels</span>
<span class="t" style="left:233.70px;top:34.84px;font-size:12px;letter-spacing:-0.217px;">Unlock All Panels</span>
<span class="t" style="left:361.30px;top:34.84px;font-size:12px;letter-spacing:-0.358px;">Show Status Panel</span>
<span class="t" style="left:46.00px;top:67.44px;font-size:12px;letter-spacing:-1.129px;color:#000;">Pipes</span>
<span class="t" style="left:108.50px;top:67.44px;font-size:12px;letter-spacing:-0.817px;color:#000;">Comp./Fans</span>
<span class="t" style="left:204.70px;top:68.44px;font-size:12px;letter-spacing:-0.734px;color:#000;">Control Valves</span>
<span class="t" style="left:308.80px;top:67.44px;font-size:12px;letter-spacing:-0.764px;color:#000;">General Junctions</span>
<span class="t" style="left:37.90px;top:95.04px;font-size:12px;font-weight:bold;letter-spacing:-0.172px;color:#000;">Define Control Valve Design Requirements</span>
<span class="t" style="left:38.20px;top:210.94px;font-size:12px;font-weight:bold;letter-spacing:-0.346px;color:#000;">Assign Design Requirements to Control Valves</span>
<span class="t" style="left:36.30px;top:138.22px;font-size:11.5px;letter-spacing:0.128px;color:#000;">New...</span>
<span class="t" style="left:100.60px;top:138.22px;font-size:11.5px;letter-spacing:-0.176px;color:#a4a4aa;">Duplicate...</span>
<span class="t" style="left:179.60px;top:138.22px;font-size:11.5px;letter-spacing:-0.395px;color:#a4a4aa;">Rename...</span>
<span class="t" style="left:262.50px;top:138.22px;font-size:11.5px;letter-spacing:-0.429px;color:#a4a4aa;">Delete</span>
<span class="t" style="left:327.40px;top:138.22px;font-size:11.5px;letter-spacing:-0.451px;color:#000;">Delete All</span>
<span class="t" style="left:94.20px;top:164.44px;font-size:12px;font-weight:bold;letter-spacing:0.063px;color:#000;">Name</span>
<span class="t" style="left:208.90px;top:164.44px;font-size:12px;font-weight:bold;letter-spacing:-0.417px;color:#000;">Parameter</span>
<span class="t" style="left:315.10px;top:164.44px;font-size:12px;font-weight:bold;letter-spacing:-0.495px;color:#000;">Location</span>
<span class="t" style="left:386.50px;top:164.44px;font-size:12px;font-weight:bold;letter-spacing:-0.135px;color:#000;">Max/Min</span>
<span class="t" style="left:458.30px;top:164.44px;font-size:12px;font-weight:bold;letter-spacing:0.255px;color:#000;">Value</span>
<span class="t" style="left:515.10px;top:164.44px;font-size:12px;font-weight:bold;letter-spacing:-0.332px;color:#000;">Units</span>
<span class="t" style="left:30.70px;top:182.84px;font-size:12px;">1</span>
<span class="t" style="left:53.50px;top:182.84px;font-size:12px;letter-spacing:-0.535px;">Min Pressure Drop</span>
<span class="t" style="left:174.00px;top:182.84px;font-size:12px;letter-spacing:-0.406px;">Pressure Drop Static</span>
<span class="t" style="left:305.50px;top:182.84px;font-size:12px;letter-spacing:-0.750px;">N/A</span>
<span class="t" style="left:376.50px;top:182.84px;font-size:12px;letter-spacing:-0.695px;">Minimum</span>
<span class="t" style="left:488.60px;top:182.84px;font-size:12px;">14</span>
<span class="t" style="left:506.00px;top:182.84px;font-size:12px;letter-spacing:-1.252px;">kPa</span>
<span class="t" style="left:47.00px;top:244.84px;font-size:12px;font-weight:bold;letter-spacing:-0.330px;color:#000;">Control Valves</span>
<span class="t" style="left:171.70px;top:237.84px;font-size:12px;font-weight:bold;letter-spacing:-0.741px;color:#000;">Min Pressure Drop</span>
<span class="t" style="left:188.30px;top:249.84px;font-size:12px;font-weight:bold;letter-spacing:-0.276px;color:#000;">( &gt; 14 kPa )</span>
<span class="t" style="left:27.70px;top:370.34px;font-size:12px;font-style:italic;letter-spacing:-0.659px;">*Dependent Design Case</span>
<span class="t" style="left:118.60px;top:489.84px;font-size:12px;letter-spacing:-0.544px;color:#0000ee;">Showing: 10 of 10 Control Valves (All)</span>
<span class="t" style="left:36.30px;top:537.84px;font-size:12px;letter-spacing:-0.475px;">Description and Help</span>
<span class="t" style="left:19.50px;top:275.34px;font-size:12px;letter-spacing:-0.987px;">J10</span>
<span class="t" style="left:19.50px;top:294.34px;font-size:12px;letter-spacing:-0.542px;">J11</span>
<span class="t" style="left:19.50px;top:313.34px;font-size:12px;letter-spacing:-0.987px;">J12</span>
<span class="t" style="left:19.50px;top:332.34px;font-size:12px;letter-spacing:-0.987px;">J13</span>
<span class="t" style="left:19.50px;top:351.34px;font-size:12px;letter-spacing:-0.987px;">J14</span>
<span class="t" style="left:19.50px;top:389.34px;font-size:12px;letter-spacing:-0.686px;">J110</span>
<span class="t" style="left:19.50px;top:408.34px;font-size:12px;letter-spacing:-0.389px;">J111</span>
<span class="t" style="left:19.50px;top:427.34px;font-size:12px;letter-spacing:-0.686px;">J112</span>
<span class="t" style="left:19.50px;top:446.34px;font-size:12px;letter-spacing:-0.686px;">J113</span>
<span class="t" style="left:19.50px;top:465.34px;font-size:12px;letter-spacing:-0.686px;">J114</span>
<span class="t" style="left:52.40px;top:612.99px;font-size:10.7px;letter-spacing:-0.033px;color:#f2f4f7;">Sizing</span>
<span class="t" style="left:43.45px;top:626.99px;font-size:10.7px;letter-spacing:0.237px;color:#f2f4f7;">Objective</span>
<span class="t" style="left:119.40px;top:612.99px;font-size:10.7px;letter-spacing:0.029px;color:#f2f4f7;">Size/Cost</span>
<span class="t" style="left:112.45px;top:626.99px;font-size:10.7px;letter-spacing:0.046px;color:#f2f4f7;">Assignments</span>
<span class="t" style="left:195.35px;top:612.99px;font-size:10.7px;letter-spacing:0.065px;color:#f2f4f7;">Candidate</span>
<span class="t" style="left:209.60px;top:626.99px;font-size:10.7px;letter-spacing:-0.281px;color:#f2f4f7;">Sets</span>
<span class="t" style="left:282.20px;top:612.99px;font-size:10.7px;letter-spacing:0.375px;color:#f2f4f7;">Design</span>
<span class="t" style="left:266.25px;top:626.99px;font-size:10.7px;letter-spacing:0.138px;color:#f2f4f7;">Requirements</span>
<span class="t" style="left:374.65px;top:612.99px;font-size:10.7px;letter-spacing:-0.167px;color:#f2f4f7;">Assign</span>
<span class="t" style="left:357.10px;top:626.99px;font-size:10.7px;letter-spacing:0.016px;color:#f2f4f7;">Cost Libraries</span>
<span class="t" style="left:449.30px;top:612.99px;font-size:10.7px;letter-spacing:-0.073px;color:#f2f4f7;">Sizing</span>
<span class="t" style="left:444.50px;top:626.99px;font-size:10.7px;letter-spacing:0.619px;color:#f2f4f7;">Method</span>
<span class="t" style="left:511.70px;top:612.99px;font-size:10.7px;letter-spacing:0.234px;color:#f2f4f7;">Dependent</span>
<span class="t" style="left:506.50px;top:626.99px;font-size:10.7px;letter-spacing:-0.144px;color:#f2f4f7;">Design Cases</span>
<span class="t" style="left:634.15px;top:612.99px;font-size:10.7px;letter-spacing:0.027px;color:#f2f4f7;">Sizing</span>
<span class="t" style="left:625.60px;top:626.99px;font-size:10.7px;letter-spacing:-0.163px;color:#f2f4f7;">Summary</span>
<div class="abs" style="left:392.70px;top:131.84px;width:296.30px;height:14px;overflow:hidden"><span class="t" style="left:1.00px;top:0;font-size:12px;letter-spacing:-0.573px;color:#0000ee">Note: The Design Requirement definitions on this panel are co</span></div>
<div class="abs" style="left:510.30px;top:489.84px;width:178.70px;height:14px;overflow:hidden"><span class="t" style="left:1.00px;top:0;font-size:12px;letter-spacing:-0.605px;color:#0000ee">Note: The Design Requirement assign</span></div>
</body>
</html>
